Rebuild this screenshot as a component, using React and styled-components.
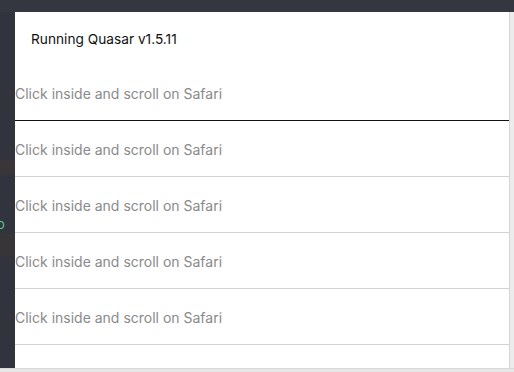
import React from "react";
import styled, { createGlobalStyle } from "styled-components";

const GlobalStyle = createGlobalStyle`
  html, body {
    margin: 0;
    padding: 0;
    background: #33353e;
    font-family: Inter, "Noto Sans", sans-serif;
  }
`;

const Page = styled.div`
  width: 514px;
  height: 372px;
  display: flex;
  flex-direction: column;
  overflow: hidden;
  background: #33353e;
`;

const TopBar = styled.div`
  height: 12px;
  flex: none;
  background: #343640;
`;

const Middle = styled.div`
  flex: 1;
  display: flex;
  min-height: 0;
`;

const Gutter = styled.div`
  width: 15px;
  flex: none;
  background: #32343d;
  display: flex;
  flex-direction: column;
  overflow: hidden;
`;

const GutterBand = styled.div`
  height: ${({ h }) => h}px;
  flex: none;
  background: ${({ tint }) => tint || "transparent"};
  color: #52c98a;
  font-size: 13px;
  line-height: ${({ h }) => h}px;
  text-indent: -3px;
`;

const Panel = styled.div`
  flex: 1;
  background: #fff;
  display: flex;
  flex-direction: column;
  overflow: hidden;
`;

const Header = styled.div`
  height: 53px;
  flex: none;
  padding-left: 16px;
  display: flex;
  align-items: center;
  font-size: 13.7px;
  color: #111;
  padding-top: 1px;
  box-sizing: border-box;
`;

const Row = styled.div`
  height: 56px;
  flex: none;
  box-sizing: border-box;
  border-bottom: 1px solid ${({ strong }) => (strong ? "#111" : "#d2d2d2")};
  display: flex;
  align-items: center;
  padding-top: 1px;
  font-size: 14px;
  color: #8a8a8a;
  white-space: nowrap;
`;

const Scroll = styled.div`
  width: 5px;
  flex: none;
  box-sizing: border-box;
  border-left: 1px solid #d6d6d6;
  background: #ececec;
`;

const BottomBar = styled.div`
  height: 4px;
  flex: none;
  background: #e6e6e6;
  border-top: 1px solid #d8d8d8;
  box-sizing: border-box;
`;

const rows = Array.from({ length: 6 });

export default function App() {
  return (
    <Page>
      <GlobalStyle />
      <TopBar />
      <Middle>
        <Gutter>
          <GutterBand h={148} />
          <GutterBand h={15} tint="#393538" />
          <GutterBand h={39} />
          <GutterBand h={20}>o</GutterBand>
          <GutterBand h={22} tint="#383539" />
        </Gutter>
        <Panel>
          <Header>Running Quasar v1.5.11</Header>
          {rows.map((_, i) => (
            <Row key={i} strong={i === 0}>
              Click inside and scroll on Safari
            </Row>
          ))}
        </Panel>
        <Scroll />
      </Middle>
      <BottomBar />
    </Page>
  );
}
